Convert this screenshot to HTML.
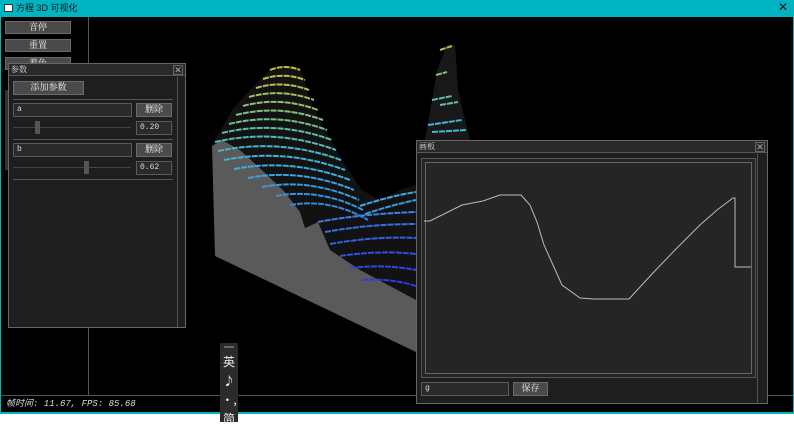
<!DOCTYPE html>
<html><head><meta charset="utf-8"><style>
*{margin:0;padding:0;box-sizing:border-box}
body{width:794px;height:422px;background:#fff;position:relative;overflow:hidden;font-family:"Liberation Mono","Noto Sans CJK SC",monospace;color:#ddd;font-size:9px}
.abs{position:absolute}
.btn{position:absolute;background:#4a4a4a;border:1px solid #6a6a6a;color:#eee;text-align:center;font-size:9px;line-height:11px;font-family:"Liberation Sans","Noto Serif CJK SC",serif}
.inp{position:absolute;background:#2a2a2a;border:1px solid #5a5a5a;color:#ddd;font-size:8px;line-height:11px;padding-left:3px}
.win{position:absolute;background:#1e1e1e;border:1px solid #666}
.tb{position:absolute;left:0;right:0;top:0;height:12px;background:#2a2a2a;border-bottom:1px solid #555;font-size:8px;line-height:11px;padding-left:2px;color:#ddd;font-family:"Liberation Sans","Noto Serif CJK SC",serif}
.x{position:absolute;right:2px;top:1px;width:10px;height:10px;border:1px solid #666;font-size:9px;line-height:8px;text-align:center;color:#aaa}
.hr{position:absolute;height:1px;background:#555}
</style></head><body>
<div class="abs" style="left:0;top:0;width:794px;height:414px;background:#000"></div>
<div class="abs" style="left:0;top:0;width:794px;height:17px;background:#00b4c2"></div>
<div class="abs" style="left:4px;top:4px;width:9px;height:8px;background:#fff;border:1px solid #333"></div>
<div class="abs" style="left:16px;top:2px;font-family:'Liberation Sans','Noto Sans CJK SC',sans-serif;font-size:9px;color:#111;line-height:12px">方程 3D 可视化</div>
<div class="abs" style="left:778px;top:1px;font-size:12px;color:#111;line-height:14px">✕</div>
<div class="abs" style="left:0;top:17px;width:1px;height:397px;background:#00b4c2"></div>
<div class="abs" style="left:793px;top:17px;width:1px;height:397px;background:#00b4c2"></div>
<div class="abs" style="left:0;top:412px;width:794px;height:2px;background:#00b4c2"></div>

<svg class="abs" style="left:0;top:0" width="794" height="422">
<polygon points="212,146 222,140 240,150 262,170 285,192 300,212 305,228 318,222 335,214 360,212 385,208 416,204 416,352 215,256" fill="#5a5a5a"/>
<polygon points="212,146 232,110 250,90 270,70 300,67 310,100 325,130 345,165 362,190 380,200 400,190 416,185 416,300 360,270 330,250 318,222 305,228 300,212 285,192 262,170 240,150 222,140" fill="#121212"/>
<polygon points="425,140 432,100 437,70 447,45 455,45 458,90 465,120 470,140" fill="#181818"/>
<g fill="none" stroke-width="2" stroke-dasharray="6 1">
<path d="M270,70 Q285,64 300,70" stroke="#c0c040"/>
<path d="M263,79 Q284,72 305,80" stroke="#b8c048"/>
<path d="M256,88 Q282,80 309,90" stroke="#b0c050"/>
<path d="M249,97 Q281,88 314,100" stroke="#a0c060"/>
<path d="M243,106 Q280,96 318,110" stroke="#90c070"/>
<path d="M236,115 Q279,104 323,120" stroke="#80c080"/>
<path d="M229,124 Q278,112 327,130" stroke="#70c090"/>
<path d="M222,133 Q277,120 332,140" stroke="#60bca8"/>
<path d="M215,142 Q276,128 336,150" stroke="#55b8b8"/>
<path d="M218,151 Q280,138 341,160" stroke="#4ab4c8"/>
<path d="M224,160 Q285,148 345,170" stroke="#40b0d8"/>
<path d="M234,169 Q292,158 350,180" stroke="#3cacdf"/>
<path d="M248,178 Q300,168 354,190" stroke="#38a4e0"/>
<path d="M262,187 Q310,178 359,200" stroke="#369ce0"/>
<path d="M276,196 Q320,188 363,210" stroke="#3494e0"/>
<path d="M290,205 Q330,198 368,220" stroke="#3288e0"/>
<path d="M360,206 Q390,196 416,192" stroke="#40a8e0"/>
<path d="M365,214 Q392,205 416,200" stroke="#3c98e0"/>
<path d="M318,222 Q360,214 416,212" stroke="#3a80e0"/>
<path d="M325,232 Q370,224 416,224" stroke="#3670e0"/>
<path d="M330,244 Q375,236 416,238" stroke="#3460e0"/>
<path d="M340,256 Q380,250 416,254" stroke="#3250e0"/>
<path d="M350,268 Q385,264 416,270" stroke="#3045e0"/>
<path d="M362,280 Q390,278 416,286" stroke="#2f3ae0"/>
<path d="M440,50 L452,46" stroke="#b0c050"/>
<path d="M436,75 L447,72" stroke="#90c070"/>
<path d="M432,100 L452,96 M440,105 L458,102" stroke="#60c0b0"/>
<path d="M428,125 L462,120 M432,132 L466,130" stroke="#40b8d8"/>
</g>
</svg>

<div class="abs" style="left:88px;top:17px;width:1px;height:378px;background:#555"></div>
<div class="abs" style="left:1px;top:395px;width:792px;height:1px;background:#555"></div>
<div class="abs" style="left:6px;top:399px;font-size:9px;color:#ddd;font-style:italic;line-height:11px">帧时间: 11.67, FPS: 85.68</div>

<div class="btn" style="left:5px;top:21px;width:66px;height:13px">音停</div>
<div class="btn" style="left:5px;top:39px;width:66px;height:13px">重置</div>
<div class="btn" style="left:5px;top:57px;width:66px;height:13px">着色</div>
<div class="abs" style="left:5px;top:90px;width:4px;height:80px;background:#333"></div>

<div class="win" style="left:8px;top:63px;width:178px;height:265px">
<div class="tb">参数<div class="x">✕</div></div>
<div class="abs" style="left:168px;top:13px;width:1px;height:250px;background:#555"></div>
<div class="btn" style="left:4px;top:17px;width:71px;height:14px">添加参数</div>
<div class="hr" style="left:4px;top:35px;width:160px"></div>
<div class="inp" style="left:4px;top:39px;width:119px;height:14px">a</div>
<div class="btn" style="left:127px;top:39px;width:36px;height:14px">删除</div>
<div class="hr" style="left:4px;top:63px;width:118px;background:#444"></div>
<div class="abs" style="left:26px;top:57px;width:5px;height:13px;background:#555"></div>
<div class="inp" style="left:127px;top:57px;width:36px;height:14px">0.20</div>
<div class="hr" style="left:4px;top:75px;width:160px"></div>
<div class="inp" style="left:4px;top:79px;width:119px;height:14px">b</div>
<div class="btn" style="left:127px;top:79px;width:36px;height:14px">删除</div>
<div class="hr" style="left:4px;top:103px;width:118px;background:#444"></div>
<div class="abs" style="left:75px;top:97px;width:5px;height:13px;background:#555"></div>
<div class="inp" style="left:127px;top:97px;width:36px;height:14px">0.62</div>
<div class="hr" style="left:4px;top:115px;width:160px"></div>
</div>

<div class="win" style="left:416px;top:140px;width:352px;height:264px">
<div class="tb">画板<div class="x">✕</div></div>
<div class="abs" style="left:340px;top:13px;width:1px;height:250px;background:#555"></div>
<div class="abs" style="left:4px;top:17px;width:335px;height:220px;border:1px solid #555;background:#252525"></div>
<div class="abs" style="left:8px;top:21px;width:327px;height:212px;border:1px solid #666"></div>
<div class="inp" style="left:4px;top:241px;width:88px;height:14px">g</div>
<div class="btn" style="left:96px;top:241px;width:35px;height:14px">保存</div>
</div>
<svg class="abs" style="left:0;top:0" width="794" height="422">
<polyline fill="none" stroke="#bbb" stroke-width="1" points="424,221 430,221 462,205 483,201 500,195 521,195 530,205 537,222 544,245 553,265 562,285 580,298 594,299 629,299 651,275 675,250 700,225 717,210 733,198 735,198 735,267 751,267"/>
</svg>

<div class="abs" style="left:220px;top:343px;width:18px;height:79px;background:#2b2b2b;font-family:'Noto Sans CJK SC',sans-serif;font-size:12px;color:#eee;text-align:center;line-height:19px">
<div style="height:6px;margin:3px 4px 0;border-top:2px solid #666"></div>英<br>♪<br>•,<br>简</div>
</body></html>
